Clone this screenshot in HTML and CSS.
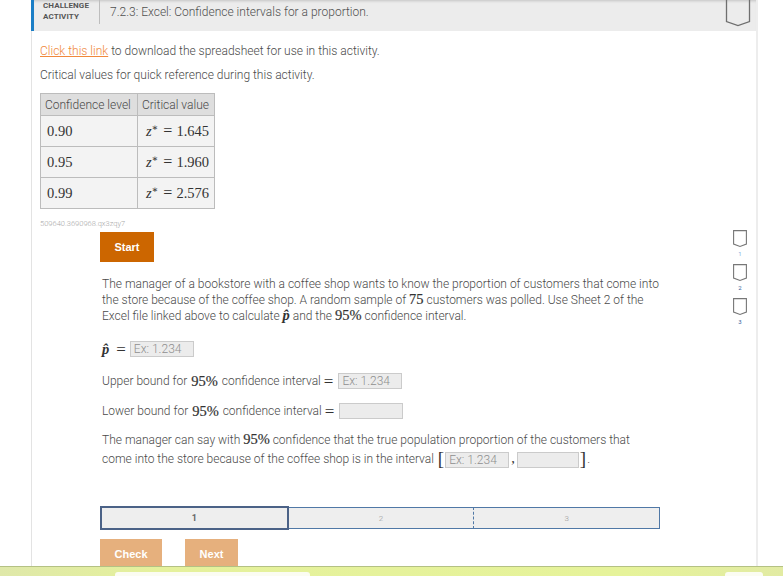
FILE: index.html
```html
<!DOCTYPE html>
<html>
<head>
<meta charset="utf-8">
<title>Challenge activity</title>
<link rel="stylesheet" href="styles.css">
</head>
<body>
<div class="page">
  <div class="main">
    <header class="hdr">
      <div class="kind">CHALLENGE<br>ACTIVITY</div>
      <div class="sep"></div>
      <div class="title">7.2.3: Excel: Confidence intervals for a proportion.</div>
      <svg class="bm" width="26" height="28" viewBox="0 0 26 28"><path d="M1.5 0 V22.5 L13 26.5 L24.5 22.5 V0" fill="none" stroke="#6f6f6f" stroke-width="1.3"/></svg>
    </header>
    <div class="content">
      <p class="intro"><a class="link" href="#">Click this link</a> to download the spreadsheet for use in this activity.</p>
      <p class="intro second">Critical values for quick reference during this activity.</p>
      <table class="crit">
        <tr><th class="c1">Confidence level</th><th class="c2">Critical value</th></tr>
        <tr><td class="c1 m">0.90</td><td class="c2 m"><i>z</i><sup>∗</sup><span class="teq">=</span>1.645</td></tr>
        <tr><td class="c1 m">0.95</td><td class="c2 m"><i>z</i><sup>∗</sup><span class="teq">=</span>1.960</td></tr>
        <tr><td class="c1 m">0.99</td><td class="c2 m"><i>z</i><sup>∗</sup><span class="teq">=</span>2.576</td></tr>
      </table>
      <div class="hash">509640.3690968.qx3zqy7</div>
      <div class="qwrap">
        <div class="q">
          <button class="start">Start</button>
          <p class="prompt">The manager of a bookstore with a coffee shop wants to know the proportion of customers that come into the store because of the coffee shop. A random sample of <span class="m b">75</span> customers was polled. Use Sheet 2 of the Excel file linked above to calculate <span class="m phat">p̂</span> and the <span class="m b">95%</span> confidence interval.</p>
          <div class="row r1"><span class="m phat">p̂</span><span class="m eq">=</span><span class="inp">Ex: 1.234</span></div>
          <div class="row r2">Upper bound for <span class="m b">95%</span> confidence interval<span class="m eq">=</span><span class="inp">Ex: 1.234</span></div>
          <div class="row r3">Lower bound for <span class="m b">95%</span> confidence interval<span class="m eq">=</span><span class="inp"></span></div>
          <p class="final">The manager can say with <span class="m b">95%</span> confidence that the true population proportion of the customers that come into the store because of the coffee shop is in the interval <span class="m br">[</span><span class="inp">Ex: 1.234</span><span class="m comma">,</span><span class="inp mid"></span><span class="m br">]</span>.</p>
          <div class="progress">
            <div class="seg s1">1</div>
            <div class="seg s2">2</div>
            <div class="seg s3">3</div>
          </div>
          <div class="actions">
            <button class="act check">Check</button>
            <button class="act next">Next</button>
          </div>
        </div>
        <nav class="levels">
          <div class="lvl"><svg width="14" height="17" viewBox="0 0 14 17"><path d="M0.6 0.6 H13.4 V14 L7 16.4 L0.6 14 Z" fill="#fff" stroke="#777" stroke-width="1.1"/></svg><span class="n n1">1</span></div>
          <div class="lvl"><svg width="14" height="17" viewBox="0 0 14 17"><path d="M0.6 0.6 H13.4 V14 L7 16.4 L0.6 14 Z" fill="#fff" stroke="#777" stroke-width="1.1"/></svg><span class="n">2</span></div>
          <div class="lvl"><svg width="14" height="17" viewBox="0 0 14 17"><path d="M0.6 0.6 H13.4 V14 L7 16.4 L0.6 14 Z" fill="#fff" stroke="#777" stroke-width="1.1"/></svg><span class="n">3</span></div>
        </nav>
      </div>
    </div>
  </div>
</div>
<div class="extbar"><div class="pill left"></div><div class="pill right"></div></div>
</body>
</html>
```

FILE: styles.css
```css
html, body {
  margin: 0;
  padding: 0;
  background: #fff;
}
body {
  font-family: Roboto, "Liberation Sans", sans-serif;
  font-weight: 300;
  color: #4a4a4a;
  font-size: 12px;
  overflow: hidden;
  height: 576px;
}
.page {
  padding-left: 31px;
  display: flex;
}
.main {
  width: 725px;
  border-right: 2px solid #ededed;
  min-height: 576px;
}
.hdr {
  height: 31px;
  background: #ececec;
  border-left: 3px solid #1b7ec6;
  display: flex;
  align-items: flex-start;
  box-shadow: inset 0 3px 3px -2px rgba(0,0,0,0.18);
  padding-left: 9px;
}
.kind {
  font-weight: 700;
  font-size: 8px;
  line-height: 11px;
  color: #555;
  width: 56px;
  letter-spacing: 0.1px;
}
.sep {
  width: 1px;
  height: 24px;
  background: #bdbdbd;
}
.title {
  margin-left: 10px;
  line-height: 24px;
  font-size: 12px;
  font-weight: 300;
  color: #505050;
}
.bm {
  margin-left: auto;
  margin-right: 5px;
  margin-top: -1px;
}
.content {
  border-left: 1px solid #e3e3e3;
  padding: 12px 0 0 8px;
}
.intro {
  margin: 0;
  line-height: 16px;
  font-size: 12px;
}
.intro.second {
  margin-top: 8px;
}
.link {
  color: #f0883c;
  text-decoration: underline;
}
.crit {
  margin-top: 10px;
  border-collapse: collapse;
  border: 1px solid #bcbcbc;
  table-layout: fixed;
  width: 175px;
}
.crit th, .crit td {
  border: 1px solid #bcbcbc;
  text-align: left;
  white-space: nowrap;
  overflow: hidden;
}
.crit th {
  background: #dedede;
  font-weight: 300;
  font-size: 12px;
  color: #4a4a4a;
  height: 22px;
  padding: 0 4px;
}
.crit td {
  background: #f3f3f3;
  height: 31px;
  padding: 0 6px;
  color: #333;
}
.crit .c1 { width: 97px; box-sizing: border-box; }
.crit .c2 { width: 77px; box-sizing: border-box; }
.crit td.c2 { text-align: right; padding-right: 5px; }
.m {
  font-family: "Liberation Serif", "DejaVu Serif", serif;
  font-size: 14.5px;
  font-weight: 400;
  color: #333;
  line-height: 1;
}
.crit td.m { font-size: 14.5px; }
.m sup {
  font-size: 10px;
  vertical-align: 5px;
  line-height: 0;
}
.teq {
  font-size: 16px;
  margin: 0 4px 0 5px;
}
.hash {
  margin-top: 11px;
  font-size: 7.5px;
  line-height: 8px;
  color: #a8a8a8;
}
.qwrap {
  display: flex;
  align-items: flex-start;
  margin-top: 4px;
}
.q {
  margin-left: 60px;
  width: 560px;
}
.start {
  display: block;
  width: 54px;
  height: 30px;
  border: none;
  background: #cc6600;
  color: #fff;
  font-family: "Liberation Sans", Arial, sans-serif;
  font-weight: 700;
  font-size: 11px;
  padding: 0;
}
.prompt {
  margin: 14px 0 0 2px;
  line-height: 16px;
  font-size: 12px;
}
.b {
  font-size: 14.5px;
  -webkit-text-stroke: 0.2px #333;
}
.phat {
  font-style: italic;
  font-weight: 700;
}
.row {
  margin-left: 2px;
  height: 20px;
  line-height: 20px;
  display: flex;
  align-items: center;
  white-space: pre;
}
.row .b { margin: 0 1px; }
.row.r1 { margin-top: 15px; }
.row.r2 { margin-top: 12px; }
.row.r3 { margin-top: 10px; }
.eq {
  font-size: 17px;
  margin: 0 5px 0 3px;
}
.r1 .eq { margin-left: 7px; margin-right: 4px; }
.inp {
  display: inline-block;
  box-sizing: border-box;
  width: 64px;
  height: 16px;
  line-height: 14px;
  background: #ececec;
  border: 1px solid #cbcbcb;
  color: #8f8f8f;
  font-size: 12px;
  font-weight: 300;
  padding-left: 3px;
  vertical-align: middle;
}
.inp.mid { width: 62px; }
.final {
  margin: 10px 0 0 2px;
  line-height: 18px;
  font-size: 12px;
}
.br {
  font-size: 19px;
  vertical-align: -2px;
  margin: 0 1px;
}
.comma { margin: 0 2px 0 2px; }
.progress {
  margin-top: 38px;
  display: flex;
  height: 24px;
}
.seg {
  flex: 1;
  box-sizing: border-box;
  background: #eeeeee;
  display: flex;
  align-items: center;
  justify-content: center;
  font-size: 8px;
  color: #999;
}
.s1 {
  border: 2px solid #4b6287;
  color: #666;
  font-weight: 700;
  font-size: 9px;
}
.s2 {
  border-top: 1px solid #5078a6;
  border-bottom: 1px solid #5078a6;
  border-right: 1px dashed #5078a6;
  margin: 1px 0;
  height: 22px;
}
.s3 {
  border: 1px solid #5078a6;
  border-left: none;
  margin: 1px 0;
  height: 22px;
}
.actions {
  display: flex;
  gap: 23px;
  margin-top: 9px;
}
.act {
  height: 30px;
  border: none;
  background: #e6b07d;
  color: #fff;
  font-family: "Liberation Sans", Arial, sans-serif;
  font-weight: 700;
  font-size: 11px;
  padding: 0;
}
.check { width: 62px; }
.next { width: 53px; }
.levels {
  margin-left: 73px;
  margin-top: -2px;
  display: flex;
  flex-direction: column;
}
.lvl {
  display: flex;
  flex-direction: column;
  align-items: center;
  width: 14px;
  height: 34px;
}
.lvl svg { display: block; }
.n {
  font-size: 6px;
  line-height: 8px;
  margin-top: 3px;
  color: #3b5fa0;
  font-weight: 400;
}
.n1 { color: #8ab0e0; }
.extbar {
  position: fixed;
  left: 0;
  right: 0;
  bottom: 0;
  height: 9px;
  border-top: 1px solid #b4c184;
  background: linear-gradient(90deg, #dfe8a9 0%, #e5f19c 20%, #e6f39a 80%, #e2eba3 100%);
}
.pill {
  position: absolute;
  top: 5px;
  height: 10px;
  background: #fbfcf2;
  border-radius: 3px;
}
.pill.left { left: 115px; width: 195px; }
.pill.right { left: 725px; width: 38px; }
```
